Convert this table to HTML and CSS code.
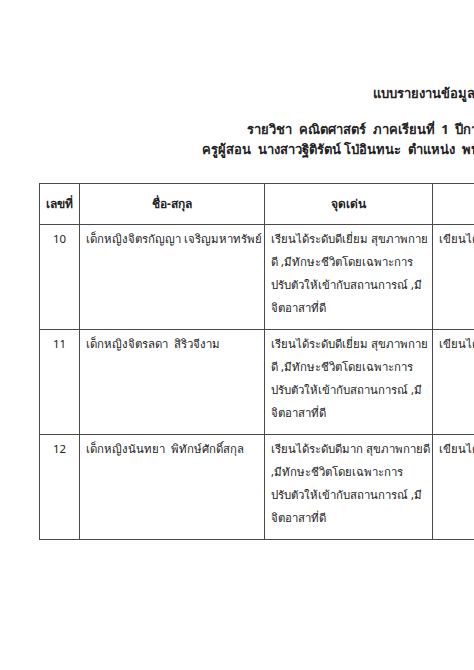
FILE: index.html
```html
<!DOCTYPE html>
<html lang="th">
<head>
<meta charset="utf-8">
<link rel="stylesheet" href="styles.css">
</head>
<body>
<div class="page">
  <div class="head">
    <div class="title">แบบรายงานข้อมูลสารสนเทศนักเรียนรายบุคคล</div>
    <div class="sub1">รายวิชา&nbsp; คณิตศาสตร์&nbsp; ภาคเรียนที่&nbsp; 1&nbsp; ปีการศึกษา&nbsp; 2562</div>
    <div class="sub2">ครูผู้สอน&nbsp; นางสาวฐิติรัตน์ โป่อินทนะ&nbsp; ตำแหน่ง&nbsp; พนักงานราชการ</div>
  </div>
  <table class="report">
    <colgroup>
      <col class="c-no">
      <col class="c-name">
      <col class="c-good">
      <col class="c-dev">
    </colgroup>
    <thead>
      <tr>
        <th>เลขที่</th>
        <th>ชื่อ-สกุล</th>
        <th>จุดเด่น</th>
        <th>จุดที่ควรพัฒนา</th>
      </tr>
    </thead>
    <tbody>
      <tr>
        <td class="no">10</td>
        <td>เด็กหญิงจิตรกัญญา เจริญมหาทรัพย์</td>
        <td>เรียนได้ระดับดีเยี่ยม สุขภาพกาย<br>ดี ,มีทักษะชีวิตโดยเฉพาะการ<br>ปรับตัวให้เข้ากับสถานการณ์ ,มี<br>จิตอาสาที่ดี</td>
        <td>เขียนได้ไม่ค่อยสวย</td>
      </tr>
      <tr>
        <td class="no">11</td>
        <td>เด็กหญิงจิตรลดา&nbsp; สิริวจีงาม</td>
        <td>เรียนได้ระดับดีเยี่ยม สุขภาพกาย<br>ดี ,มีทักษะชีวิตโดยเฉพาะการ<br>ปรับตัวให้เข้ากับสถานการณ์ ,มี<br>จิตอาสาที่ดี</td>
        <td>เขียนได้ไม่ค่อยสวย</td>
      </tr>
      <tr>
        <td class="no">12</td>
        <td>เด็กหญิงนันทยา&nbsp; พิทักษ์ศักดิ์สกุล</td>
        <td>เรียนได้ระดับดีมาก สุขภาพกายดี<br>,มีทักษะชีวิตโดยเฉพาะการ<br>ปรับตัวให้เข้ากับสถานการณ์ ,มี<br>จิตอาสาที่ดี</td>
        <td>เขียนได้ไม่ค่อยสวย</td>
      </tr>
    </tbody>
  </table>
</div>
</body>
</html>
```
FILE: styles.css
```css
html, body {
  margin: 0;
  padding: 0;
  background: #ffffff;
  overflow: hidden;
}
body {
  width: 474px;
  height: 670px;
}
.page {
  width: 800px;
  font-family: "Noto Sans", "DejaVu Sans", sans-serif;
  color: #222222;
  font-size: 11.4px;
}
.head {
  padding-top: 83px;
  font-weight: bold;
  font-size: 13px;
  white-space: nowrap;
}
.title {
  padding-left: 373px;
  line-height: 20px;
}
.sub1 {
  padding-left: 247px;
  margin-top: 16px;
  line-height: 20px;
}
.sub2 {
  padding-left: 202px;
  line-height: 20px;
}
.report {
  margin-top: 24px;
  margin-left: 39px;
  border-collapse: collapse;
  table-layout: fixed;
  width: 600px;
}
.c-no { width: 40px; }
.c-name { width: 185px; }
.c-good { width: 168px; }
.c-dev { width: 207px; }
.report th, .report td {
  border: 1.5px solid #4a4a4a;
  vertical-align: top;
  text-align: left;
  white-space: nowrap;
  overflow: hidden;
}
.report th {
  height: 40.5px;
  box-sizing: border-box;
  text-align: center;
  vertical-align: middle;
  font-weight: bold;
  font-size: 12px;
  padding: 0 2px;
}
.report td {
  height: 105.3px;
  box-sizing: border-box;
  padding: 2px 4px 0 6px;
  line-height: 23.1px;
}
.report td.no {
  text-align: center;
  padding-left: 0;
  padding-right: 0;
}
```
